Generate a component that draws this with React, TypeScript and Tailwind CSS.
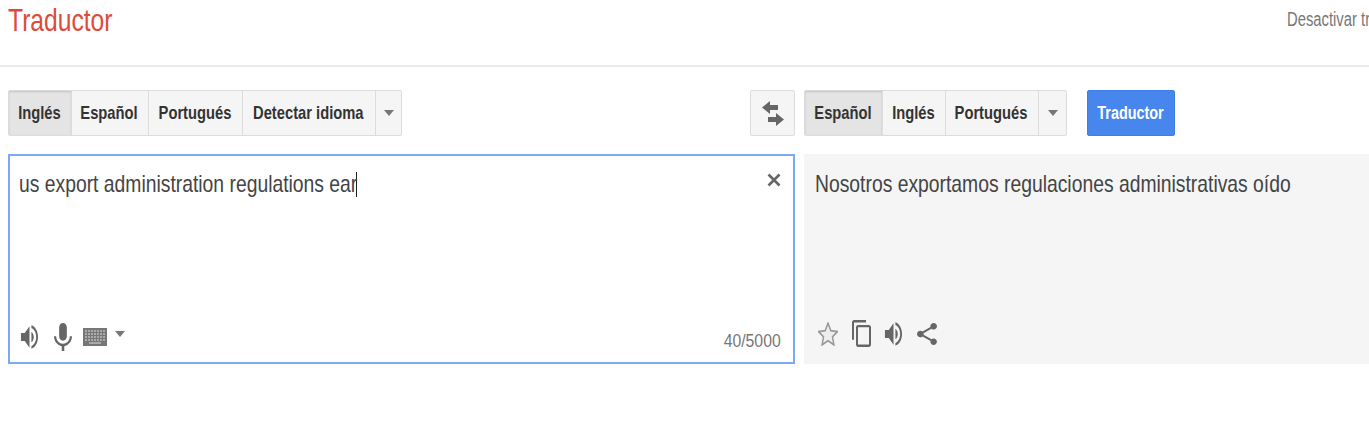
import React from "react";

const FONT = "font-['Liberation_Sans',Arial,sans-serif]";

const Narrow = ({ children, className = "" }: { children: React.ReactNode; className?: string }) => (
  <span className={`inline-block shrink-0 whitespace-nowrap ${className}`}>{children}</span>
);

const Caret = ({ className = "" }: { className?: string }) => (
  <svg viewBox="0 0 10 6" className={`h-[6px] w-[10px] ${className}`}>
    <path d="M0 0h10L5 6z" fill="#777" />
  </svg>
);

const Seg = ({ label, w, active }: { label: string; w: string; active?: boolean }) => (
  <div
    className={`flex h-full items-center justify-center border-r border-[#dcdcdc] pr-[2px] ${w} ${
      active ? "bg-[#e4e4e4] shadow-[inset_0_1px_2px_rgba(0,0,0,0.15)]" : ""
    }`}
  >
    <Narrow className="scale-x-[0.775] text-[19px] font-bold text-[#333]">{label}</Narrow>
  </div>
);

const Group = ({ items, caretW }: { items: { label: string; w: string; active?: boolean }[]; caretW: string }) => (
  <div className="flex h-[46px] items-center overflow-hidden rounded-[2px] border border-[#dcdcdc] bg-[#f5f5f5]">
    {items.map((it) => (
      <Seg key={it.label} {...it} />
    ))}
    <div className={`flex h-full items-center justify-center ${caretW}`}>
      <Caret />
    </div>
  </div>
);

const Speaker = () => (
  <svg viewBox="2 3 20 18" preserveAspectRatio="none" className="h-[24px] w-[19px]" fill="#666">
    <path d="M3 9v6h4l5 5V4L7 9H3zm13.5 3c0-1.77-1.02-3.29-2.5-4.03v8.05c1.48-.73 2.5-2.25 2.5-4.02zM14 3.23v2.06c2.89.86 5 3.54 5 6.71s-2.11 5.85-5 6.71v2.06c4.01-.91 7-4.49 7-8.77s-2.99-7.86-7-8.77z" />
  </svg>
);

const Mic = () => (
  <svg viewBox="5 2 14 19" preserveAspectRatio="none" className="h-[28px] w-[18px]" fill="#666">
    <path d="M12 14c1.66 0 3-1.34 3-3V5c0-1.66-1.34-3-3-3S9 3.34 9 5v6c0 1.66 1.34 3 3 3zm5.3-3c0 3-2.54 5.1-5.3 5.1S6.7 14 6.7 11H5c0 3.41 2.72 6.23 6 6.72V21h2v-3.28c3.28-.48 6-3.3 6-6.72h-1.7z" />
  </svg>
);

const Keyboard = () => (
  <svg viewBox="0 0 24 18" className="h-[18px] w-[24px]">
    <rect width="24" height="18" fill="#777" />
    {[2, 5, 8, 11].map((y) =>
      [2, 5, 8, 11, 14, 17, 20].map((x) => <rect key={`${x}-${y}`} x={x} y={y} width="2" height="2" fill="#aaa" />)
    )}
    <rect x="6" y="14" width="12" height="2" fill="#aaa" />
  </svg>
);

export default function App() {
  return (
    <div className={`h-[425px] w-[1369px] overflow-hidden bg-white ${FONT}`}>
      <header className="flex h-[67px] items-start justify-between overflow-hidden border-b-2 border-[#ebebeb]">
        <Narrow className="ml-[8px] mt-[1px] origin-left scale-x-[0.77] text-[32px] leading-[38px] text-[#dd4b39]">
          Traductor
        </Narrow>
        <div className="w-[82px] overflow-hidden pt-[7px]">
          <Narrow className="origin-left scale-x-[0.74] text-[20px] leading-[24px] text-[#777]">Desactivar traducción</Narrow>
        </div>
      </header>

      <div className="mt-[23px] flex items-center pl-[8px]">
        <Group
          caretW="w-[25px]"
          items={[
            { label: "Inglés", w: "w-[63px]", active: true },
            { label: "Español", w: "w-[77px]" },
            { label: "Portugués", w: "w-[94px]" },
            { label: "Detectar idioma", w: "w-[133px]" },
          ]}
        />
        <div className="ml-[348px] flex h-[46px] w-[45px] items-center justify-center rounded-[2px] border border-[#dcdcdc] bg-[#f5f5f5]">
          <svg viewBox="0 0 22 25" className="h-[25px] w-[22px]" fill="#666">
            <path d="M0 6.500 8 0v4h8v5H8v4zM22 18.500 14 12v4H6v5h8v4z" />
          </svg>
        </div>
        <div className="ml-[9px]">
          <Group
            caretW="w-[27px]"
            items={[
              { label: "Español", w: "w-[78px]", active: true },
              { label: "Inglés", w: "w-[63px]" },
              { label: "Portugués", w: "w-[93px]" },
            ]}
          />
        </div>
        <div className="ml-[20px] flex h-[46px] w-[88px] items-center justify-center rounded-[2px] border border-[#3d7fe6] bg-[#4787ed]">
          <Narrow className="scale-x-[0.8] text-[18px] font-bold text-white">Traductor</Narrow>
        </div>
      </div>

      <div className="mt-[18px] flex h-[210px] pl-[8px]">
        <div className="flex w-[787px] shrink-0 flex-col justify-between border-2 border-[#7ba9f5] pb-[11px] pl-[9px] pr-[12px] pt-[13px]">
          <div className="flex items-start justify-between">
            <div className="flex items-center">
              <Narrow className="origin-left scale-x-[0.805] text-[24px] leading-[30px] text-[#444]">
                us export administration regulations ear
              </Narrow>
              <span className="ml-[-83px] h-[25px] w-px bg-[#222]" />
            </div>
            <svg viewBox="0 0 14 14" className="mt-[4px] h-[14px] w-[14px]">
              <path d="M1.5 1.5l11 11M12.500 1.500l-11 11" stroke="#666" strokeWidth="2.600" />
            </svg>
          </div>
          <div className="flex items-end justify-between">
            <div className="flex items-center">
              <span className="ml-[1px] flex"><Speaker /></span>
              <span className="ml-[15px] flex"><Mic /></span>
              <span className="ml-[11px] flex"><Keyboard /></span>
              <Caret className="mb-[7px] ml-[8px]" />
            </div>
            <Narrow className="mb-[-1px] origin-right scale-x-[0.83] text-[19px] leading-[22px] text-[#777]">40/5000</Narrow>
          </div>
        </div>
        <div className="ml-[9px] flex min-w-0 flex-1 flex-col justify-between bg-[#f5f5f5] pb-[17px] pl-[11px] pt-[15px]">
          <Narrow className="origin-left scale-x-[0.805] text-[24px] leading-[30px] text-[#444]">
            Nosotros exportamos regulaciones administrativas oído
          </Narrow>
          <div className="ml-[3px] flex items-center">
            <svg viewBox="2 2 20 20" preserveAspectRatio="none" className="h-[24px] w-[20px]">
              <path d="M12 3l2.800 6.200 6.700.700-5 4.500 1.400 6.600L12 17.600 6.100 21l1.400-6.600-5-4.500 6.700-.700z" fill="#eee" stroke="#999" strokeWidth="1.500" />
            </svg>
            <svg viewBox="2 1 19 22" preserveAspectRatio="none" className="ml-[14px] h-[27px] w-[19px]" fill="#666">
              <path d="M16 1H4c-1.100 0-2 .9-2 2v14h2V3h12V1zm3 4H8c-1.100 0-2 .9-2 2v14c0 1.100.9 2 2 2h11c1.100 0 2-.9 2-2V7c0-1.100-.9-2-2-2zm0 16H8V7h11v14z" />
            </svg>
            <span className="ml-[13px] flex"><Speaker /></span>
            <svg viewBox="3 2 18 20" preserveAspectRatio="none" className="ml-[14px] h-[22px] w-[20px]" fill="#666">
              <path d="M18 16.080c-.76 0-1.440.3-1.960.77L8.910 12.700c.05-.23.09-.46.09-.7s-.04-.47-.09-.7l7.050-4.110c.54.5 1.250.81 2.040.81 1.660 0 3-1.340 3-3s-1.340-3-3-3-3 1.340-3 3c0 .24.04.47.09.7L8.040 9.810C7.500 9.310 6.790 9 6 9c-1.660 0-3 1.340-3 3s1.340 3 3 3c.79 0 1.500-.31 2.040-.81l7.120 4.160c-.05.21-.08.43-.08.65 0 1.610 1.310 2.920 2.920 2.920s2.920-1.310 2.920-2.920-1.310-2.920-2.920-2.920z" />
            </svg>
          </div>
        </div>
      </div>
    </div>
  );
}
